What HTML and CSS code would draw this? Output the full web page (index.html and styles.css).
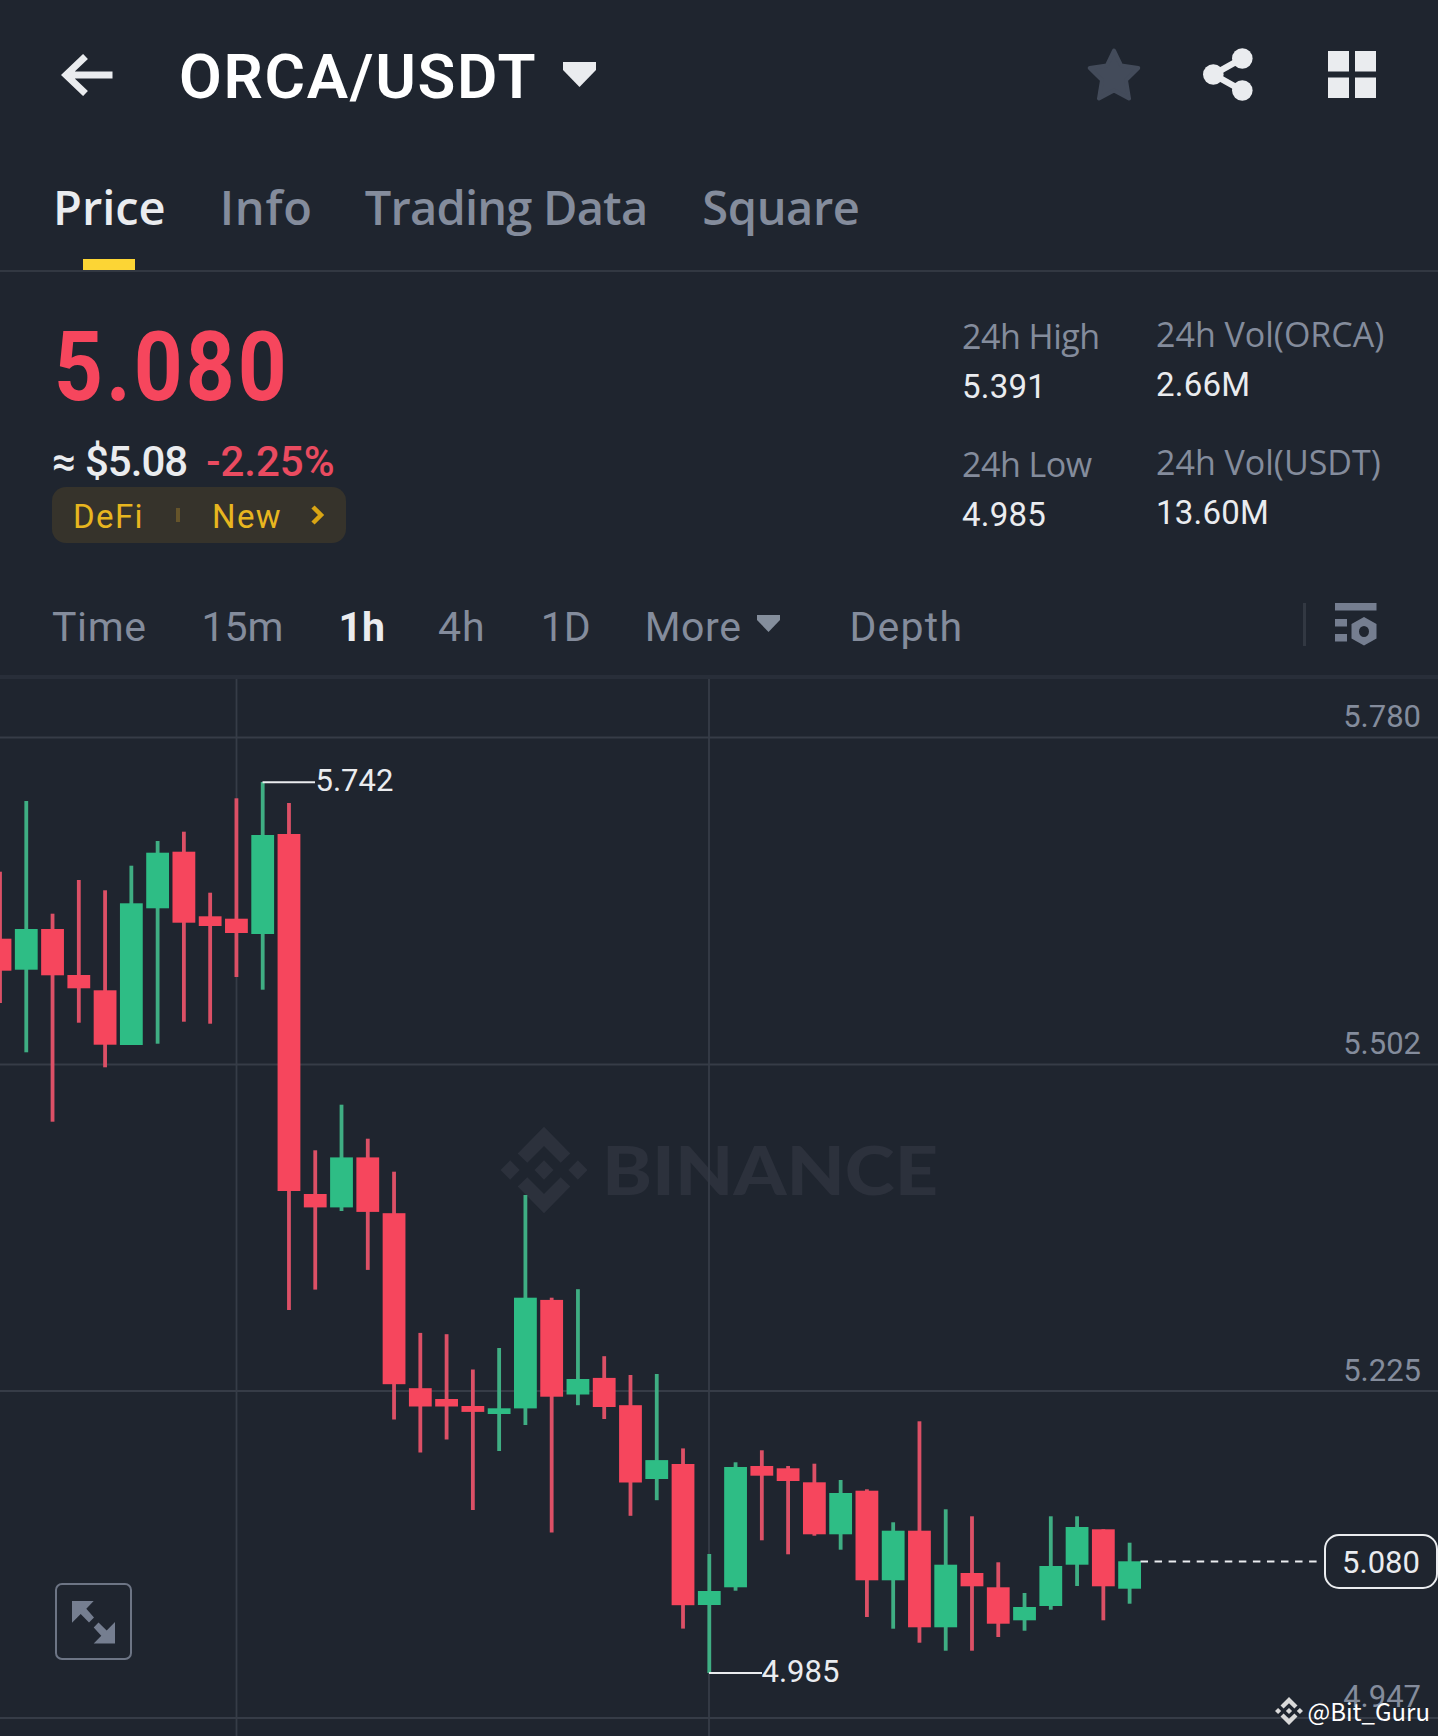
FILE: index.html
```html
<!DOCTYPE html>
<html lang="en">
<head>
    <meta charset="UTF-8">
    <meta name="viewport" content="width=device-width, initial-scale=1.0">
    <title>ORCA/USDT</title>
    <link rel="stylesheet" href="styles.css">
</head>
<body>
    <div class="header">
        <svg class="icon-back" width="52" height="42" viewBox="0 0 52 42"><path d="M51.5 21H6M24.5 2.500L5 21l19.500 18.500" fill="none" stroke="#eaecef" stroke-width="7"/></svg>
        <h1>ORCA/USDT</h1>
        <svg class="icon-caret" width="33" height="25" viewBox="0 0 33 25"><path d="M0 0h33v8L16.500 25 0 8z" fill="#eaecef"/></svg>
        <div class="actions">
            <svg width="54" height="54" viewBox="0 0 54 54"><path d="M27 2.500l7.200 15 17 2.500-12.200 12.200 3 18.300L27 42.500 12 50.500l3-18.300L2.800 20l17-2.500z" fill="#434b5a" stroke="#434b5a" stroke-width="4" stroke-linejoin="round"/></svg>
            <svg width="50" height="53" viewBox="0 0 50 53"><path d="M39 10.500L10.500 26.500 39 42.500" fill="none" stroke="#eaecef" stroke-width="6.500"/><circle cx="39.300" cy="10.500" r="10.300" fill="#eaecef"/><circle cx="10.300" cy="26.500" r="10.300" fill="#eaecef"/><circle cx="39.300" cy="42.500" r="10.300" fill="#eaecef"/></svg>
            <svg width="48" height="47" viewBox="0 0 48 47"><path d="M0 0h21v20.500H0zM27 0h21v20.500H27zM0 26.500h21V47H0zM27 26.500h21V47H27z" fill="#eaecef"/></svg>
        </div>
    </div>
    <div class="tabs">
        <div class="tab active">Price</div>
        <div class="tab tab-info">Info</div>
        <div class="tab tab-data">Trading Data</div>
        <div class="tab tab-square">Square</div>
    </div>
    <div class="summary">
        <div class="quote">
            <div class="price">5.080</div>
            <div class="fiat"><span class="approx">≈</span><span class="usd">$5.08</span><span class="change">-2.25%</span></div>
            <div class="tags">
                <span>DeFi</span>
                <i></i>
                <span>New</span>
                <svg width="14" height="20" viewBox="0 0 14 20"><path d="M2 2l8 8-8 8" fill="none" stroke="#d9a514" stroke-width="4.500"/></svg>
            </div>
        </div>
        <div class="stats">
            <div class="stat"><span class="label">24h High</span><span class="value">5.391</span></div>
            <div class="stat"><span class="label">24h Low</span><span class="value">4.985</span></div>
        </div>
        <div class="stats volume">
            <div class="stat"><span class="label">24h Vol(ORCA)</span><span class="value">2.66M</span></div>
            <div class="stat"><span class="label">24h Vol(USDT)</span><span class="value">13.60M</span></div>
        </div>
    </div>
    <div class="intervals">
        <span class="iv-time">Time</span>
        <span class="iv-15m">15m</span>
        <span class="iv-1h active">1h</span>
        <span class="iv-4h">4h</span>
        <span class="iv-1d">1D</span>
        <span class="iv-more">More</span>
        <svg class="more-caret" width="23" height="17" viewBox="0 0 23 17"><path d="M0 0h23v5L11.500 17 0 5z" fill="#848e9c"/></svg>
        <span class="iv-depth">Depth</span>
        <div class="settings">
            <svg width="42" height="43" viewBox="0 0 42 43"><path fill-rule="evenodd" d="M0 0h41.500v7.500H0zM0 16h12v7.500H0zM0 31h12v7.500H0zM29 14l12.500 7v14.500L29 42.500 16.500 35.500V21zM29 23a5 5.500 0 1 0 0 11a5 5.500 0 1 0 0-11z" fill="#757e90"/></svg>
        </div>
    </div>
    <div class="chart">
        <svg id="chart" width="1438" height="1057" viewBox="0 679 1438 1057">
            <g class="brand">
                <path d="M544 1126.700l26.300 26.700-9.600 9.300-16.700-16.700-16.700 16.700-9.600-9.300zM544 1213.300l-26.300-26.700 9.600-9.300 16.700 16.700 16.700-16.700 9.600 9.300zM500.500 1170l9.600-9.700 9.600 9.700-9.600 9.700zM534.400 1170l9.600-9.700 9.600 9.700-9.600 9.700zM568.300 1170l9.600-9.700 9.600 9.700-9.600 9.700z"/>
                <text x="602" y="1194.500" textLength="336" lengthAdjust="spacingAndGlyphs">BINANCE</text>
            </g>
            <g class="grid">
                <path d="M0 737.500H1438M0 1064.500H1438M0 1391H1438M0 1718H1438M236.500 679V1736M709 679V1736"/>
            </g>
            <g id="candles"></g>
            <g class="marks">
                <path d="M262.500 782.300H315M709 1673H762"/>
                <path d="M1140.500 1561.500H1317" stroke-dasharray="7.500 6.550"/>
                <text x="315.500" y="791">5.742</text>
                <text x="761.500" y="1682">4.985</text>
            </g>
            <g class="axis">
                <text x="1421" y="726.500">5.780</text>
                <text x="1421" y="1053.500">5.502</text>
                <text x="1421" y="1380.500">5.225</text>
                <text x="1421" y="1707">4.947</text>
            </g>
        </svg>
        <div class="last-price">5.080</div>
        <div class="expand">
            <svg width="43" height="43" viewBox="0 0 43 43"><path d="M0 0h21.700L14.300 7.700 22 16.500 17 21.500 8.700 13 0 21.700zM43 42.500H21.700L29.300 34.700 21.700 26.500 26.500 21.500 34.700 29.500 43 21z" fill="#757e90"/></svg>
        </div>
        <div class="author">
            <svg width="28" height="28" viewBox="0 0 28 28"><path d="M14 0l8.500 8.600-3.100 3L14 6.200l-5.400 5.400-3.100-3zM14 28l-8.500-8.600 3.100-3L14 21.800l5.400-5.400 3.100 3zM0 14l3.100-3.100L6.200 14l-3.100 3.100zM10.900 14l3.100-3.100 3.100 3.100-3.100 3.100zM21.800 14l3.100-3.100L28 14l-3.100 3.100z" fill="#d9d9d9"/></svg>
            <span>@Bit_Guru</span>
        </div>
    </div>
    <script src="chart.js"></script>
</body>
</html>
```
FILE: styles.css
```css
* {
    box-sizing: border-box;
}
body {
    margin: 0;
    width: 1438px;
    height: 1736px;
    overflow: hidden;
    background: #1f252f;
    color: #eaecef;
    font-family: Roboto, "Liberation Sans", sans-serif;
}
svg {
    display: block;
    flex: none;
}
span, h1 {
    white-space: nowrap;
}
.header {
    display: flex;
    align-items: center;
    height: 149px;
    padding: 0 62px 0 61px;
}
.header h1 {
    margin: 4px 0 0 66px;
    font-size: 62px;
    line-height: 80px;
    font-weight: 600;
    letter-spacing: 1.7px;
    color: #fff;
}
.icon-caret {
    margin-left: 26px;
}
.actions {
    display: flex;
    align-items: center;
    margin-left: auto;
}
.actions svg + svg {
    margin-left: 62px;
}
.actions svg + svg + svg {
    margin-left: 75px;
}
.tabs {
    display: flex;
    height: 123px;
    padding: 26px 53px 0;
    border-bottom: 2px solid #323842;
    font: 600 47px/64px "Open Sans", sans-serif;
    color: #848c9c;
}
.tab.active {
    color: #eaecef;
}
.tab.active::after {
    content: "";
    display: block;
    width: 52px;
    height: 11px;
    margin: 20px auto 0;
    background: #fcd535;
}
.tab-info {
    margin-left: 54px;
    letter-spacing: 0.8px;
}
.tab-data {
    margin-left: 52px;
    letter-spacing: -0.8px;
}
.tab-square {
    margin-left: 55px;
    letter-spacing: -0.4px;
}
.summary {
    display: flex;
    height: 294px;
    padding: 0 53px 0 52px;
}
.quote {
    flex: 1;
}
.price {
    margin: 42px 0 0 2px;
    font-size: 97px;
    line-height: 106px;
    font-weight: 700;
    letter-spacing: 3.4px;
    color: #f6465d;
    transform: scaleX(0.88);
    transform-origin: left;
}
.fiat {
    display: flex;
    margin-top: 17px;
    font-size: 42px;
    line-height: 50px;
    font-weight: 500;
}
.usd {
    margin-left: 9px;
    letter-spacing: -1px;
}
.change {
    margin-left: 19px;
    letter-spacing: 0;
    color: #ea4b60;
}
.tags {
    display: flex;
    align-items: center;
    width: 294px;
    height: 56px;
    padding-left: 21px;
    border-radius: 14px;
    background: #36332b;
    font-size: 33px;
    letter-spacing: 1.4px;
    color: #e8b61f;
}
.tags span {
    padding-top: 2px;
}
.tags i {
    width: 4px;
    height: 14px;
    margin: 0 32px;
    background: #65542a;
}
.tags svg {
    margin-left: 29px;
}
.stats {
    width: 194px;
    padding-top: 43px;
}
.stats.volume {
    width: 229px;
    padding-top: 41px;
}
.stat {
    display: flex;
    flex-direction: column;
    height: 128px;
}
.stat .label {
    font: 34px/42px "Open Sans", sans-serif;
    letter-spacing: -0.5px;
    color: #848c9c;
}
.volume .label {
    letter-spacing: 0;
}
.stat .value {
    margin-top: 9px;
    font-size: 33px;
    line-height: 42px;
    letter-spacing: 0.2px;
}
.intervals {
    display: flex;
    align-items: center;
    height: 113px;
    padding: 8px 61px 0 52px;
    border-bottom: 4px solid #282e39;
    font-size: 41px;
    line-height: 50px;
    color: #848c9c;
}
.intervals span {
    padding-top: 4px;
}
.intervals .active {
    font-weight: 700;
    color: #eaecef;
}
.iv-time {
    letter-spacing: 0.6px;
}
.iv-15m, .iv-1h, .iv-1d {
    margin-left: 55px;
}
.iv-4h {
    margin-left: 53px;
    letter-spacing: 1px;
}
.iv-more {
    margin-left: 54px;
    letter-spacing: 0.6px;
}
.more-caret {
    margin: 0 0 3px 15px;
}
.iv-depth {
    margin-left: 70px;
    letter-spacing: 1.2px;
}
.settings {
    display: flex;
    align-items: center;
    height: 43px;
    margin-left: auto;
    padding-left: 29px;
    border-left: 3px solid #323842;
}
.chart {
    position: relative;
    height: 1057px;
}
.brand {
    fill: #2c313c;
    font-family: Lato, sans-serif;
    font-size: 67px;
    font-weight: 900;
}
.grid path {
    stroke: #363c47;
    stroke-width: 1.8;
}
.up {
    fill: #2ebd85;
}
.down {
    fill: #f6465d;
}
.up .wick {
    fill: #3fae83;
}
.down .wick {
    fill: #dc5066;
}
.marks path {
    stroke: #eaecef;
    stroke-width: 2;
}
.marks text {
    fill: #eaecef;
    font-size: 31px;
}
.axis text {
    fill: #848c9c;
    font-size: 31px;
    text-anchor: end;
}
.last-price {
    position: absolute;
    top: 855px;
    right: 0;
    width: 114px;
    height: 55px;
    border: 2px solid #eaecef;
    border-radius: 15px;
    background: #1f252f;
    font-size: 31px;
    line-height: 53px;
    text-align: center;
}
.expand {
    position: absolute;
    left: 55px;
    top: 904px;
    width: 77px;
    height: 77px;
    padding: 16px 15px;
    border: 2px solid #6d7585;
    border-radius: 7px;
}
.author {
    position: absolute;
    right: 8px;
    bottom: 9px;
    display: flex;
    align-items: center;
    gap: 4px;
    font: 24px/32px "Noto Sans CJK SC", sans-serif;
    color: #fff;
}
```
FILE: chart.js
```js
// direction, high, body top, body bottom, low
const candles = [
    ['down', 871.7, 938.7, 970.7, 1003],
    ['up', 801, 929, 969.7, 1052.3],
    ['down', 913.7, 929, 975.3, 1121.7],
    ['down', 880, 975, 988.3, 1022.7],
    ['down', 890.3, 990.3, 1044.7, 1067.3],
    ['up', 865.7, 903.3, 1045, 1045],
    ['up', 841, 852.7, 908.3, 1043.7],
    ['down', 831.7, 851.7, 922.7, 1021.7],
    ['down', 892.7, 916.3, 926, 1023.7],
    ['down', 798.3, 918.7, 933, 977],
    ['up', 782, 835, 934, 989.7],
    ['down', 803, 834, 1191, 1310],
    ['down', 1150.3, 1194, 1207.4, 1289.6],
    ['up', 1104.7, 1157.4, 1207.4, 1211],
    ['down', 1138.7, 1157.4, 1211.9, 1269.9],
    ['down', 1171.7, 1213.2, 1384.2, 1419.5],
    ['down', 1332.9, 1388.2, 1406.5, 1452.5],
    ['down', 1334.2, 1399, 1406.5, 1439.5],
    ['down', 1369.5, 1406, 1411.9, 1510],
    ['up', 1348, 1408.3, 1414, 1451],
    ['up', 1195, 1297.7, 1408.4, 1425],
    ['down', 1297.7, 1299.9, 1396.7, 1532.5],
    ['up', 1289.2, 1379, 1394.5, 1405.2],
    ['down', 1356.2, 1377.9, 1407, 1419],
    ['down', 1375, 1405.2, 1482.5, 1515.8],
    ['up', 1374, 1460.1, 1479, 1500.2],
    ['down', 1448.4, 1464, 1605.2, 1628.6],
    ['up', 1554, 1591, 1605, 1673],
    ['up', 1462.3, 1467, 1587.3, 1590.7],
    ['down', 1450.3, 1466, 1475.7, 1540.3],
    ['down', 1466, 1468.3, 1481, 1554.3],
    ['down', 1463.7, 1482.3, 1534.3, 1535.7],
    ['up', 1480, 1493, 1534.3, 1549.7],
    ['down', 1489.3, 1490.7, 1580.3, 1617],
    ['up', 1522.3, 1530.7, 1580.3, 1628.7],
    ['down', 1421.3, 1530.7, 1627.3, 1642.7],
    ['up', 1509.3, 1564.7, 1627.3, 1650.7],
    ['down', 1516.3, 1573, 1586.3, 1650.7],
    ['down', 1562.3, 1587.3, 1623.7, 1637],
    ['up', 1593, 1607, 1620.3, 1630.7],
    ['up', 1516.3, 1566, 1606, 1609.7],
    ['up', 1516.3, 1527, 1564.7, 1586],
    ['down', 1529.3, 1529.3, 1586.3, 1620.3],
    ['up', 1542.7, 1561.3, 1588.7, 1603.7]
];
const step = 26.27;

document.getElementById('candles').innerHTML = candles.map(([dir, high, top, bottom, low], i) => {
    const x = i * step;
    return `<g class="${dir}">
        <rect class="wick" x="${x - 1.9}" y="${high}" width="3.8" height="${low - high}"/>
        <rect x="${x - 11.4}" y="${top}" width="22.8" height="${bottom - top}"/>
    </g>`;
}).join('');
```
